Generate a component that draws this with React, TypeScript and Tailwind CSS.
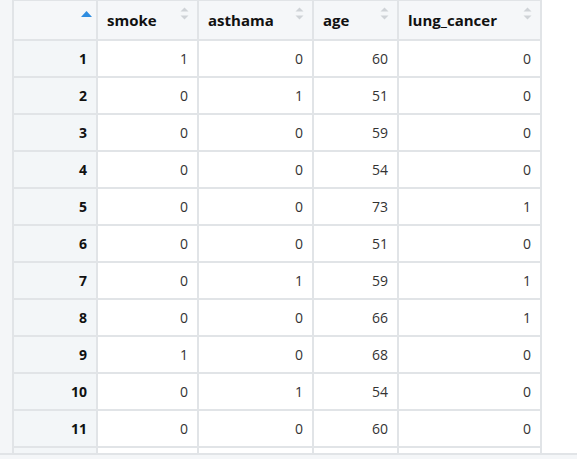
import React from "react";

const cols = [
  { name: "smoke", w: "w-[101px]" },
  { name: "asthama", w: "w-[115px]" },
  { name: "age", w: "w-[85px]" },
  { name: "lung_cancer", w: "w-[143px]" },
];

const rows = [
  [1, 0, 60, 0],
  [0, 1, 51, 0],
  [0, 0, 59, 0],
  [0, 0, 54, 0],
  [0, 0, 73, 1],
  [0, 0, 51, 0],
  [0, 1, 59, 1],
  [0, 0, 66, 1],
  [1, 0, 68, 0],
  [0, 1, 54, 0],
  [0, 0, 60, 0],
];

function SortBoth() {
  return (
    <svg width="9" height="13" viewBox="0 0 9 13" className="shrink-0">
      <path d="M4.5 0.5 L8.5 4.5 L0.5 4.5 Z" fill="#cfd3d7" />
      <path d="M4.5 12.5 L8.5 8.5 L0.5 8.5 Z" fill="#cfd3d7" />
    </svg>
  );
}

export default function App() {
  return (
    <div
      className="w-[577px] h-[459px] flex flex-col bg-white overflow-hidden text-[#333]"
      style={{ fontFamily: '"Open Sans", "Noto Sans", sans-serif' }}
    >
      <div className="flex flex-1 min-h-0 overflow-hidden">
        <div className="w-[12px] bg-[#f4f6f8]" />
        <div className="flex flex-col border-l-2 border-[#e1e4e7] overflow-hidden">
          {/* header */}
          <div className="flex shrink-0 h-[41px] border-t border-b-2 border-[#e1e4e7] bg-[#f5f7f9] text-[15px] font-bold text-[#111]">
            <div className="w-[84px] border-r-2 border-[#e1e4e7] relative">
              <svg width="11" height="6" viewBox="0 0 11 6" className="absolute left-[67px] top-[10px]">
                <path d="M5.5 0 L11 6 L0 6 Z" fill="#2e8de0" />
              </svg>
            </div>
            {cols.map((c) => (
              <div
                key={c.name}
                className={`${c.w} border-r-2 border-[#e1e4e7] flex items-center pl-[9px] relative`}
              >
                <span className="leading-none pt-[1px]">{c.name}</span>
                <div className="absolute right-[8px] top-[6px]">
                  <SortBoth />
                </div>
              </div>
            ))}
          </div>
          {rows.map((r, i) => (
            <div key={i} className="flex h-[37px] shrink-0 border-b-2 border-[#e1e4e7] text-[14px]">
              <div className="w-[84px] border-r-2 border-[#e1e4e7] bg-[#f3f6f8] flex items-center justify-end pr-[9px] font-bold text-[#111]">
                {i + 1}
              </div>
              {r.map((v, j) => (
                <div
                  key={j}
                  className={`${cols[j].w} border-r-2 border-[#e1e4e7] flex items-center justify-end pr-[9px]`}
                >
                  {v}
                </div>
              ))}
            </div>
          ))}
          <div className="flex h-[37px] shrink-0">
            <div className="w-[84px] border-r-2 border-[#e1e4e7] bg-[#f3f6f8]" />
            {cols.map((c) => (
              <div key={c.name} className={`${c.w} border-r-2 border-[#e1e4e7]`} />
            ))}
          </div>
        </div>
      </div>
      <div className="h-[6px] shrink-0 border-t-2 border-[#e1e4e7] bg-[#f4f6f8]" />
    </div>
  );
}
